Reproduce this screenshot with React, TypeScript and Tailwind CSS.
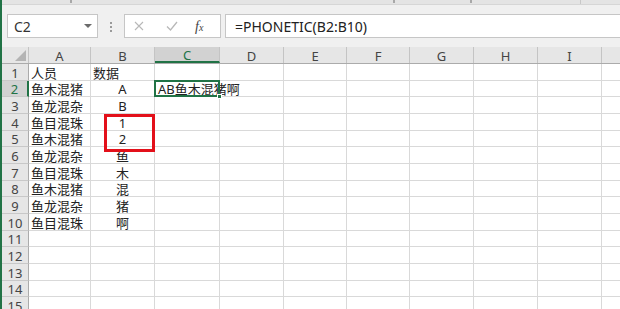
import React from 'react';

const font = { fontFamily: '"Noto Sans", "Noto Sans CJK SC", sans-serif' };

const columns = [
  { key: 'A', w: 'w-[62px]' },
  { key: 'B', w: 'w-[64px]' },
  { key: 'C', w: 'w-[65px]' },
  { key: 'D', w: 'w-[64px]' },
  { key: 'E', w: 'w-[63px]' },
  { key: 'F', w: 'w-[63px]' },
  { key: 'G', w: 'w-[64px]' },
  { key: 'H', w: 'w-[64px]' },
  { key: 'I', w: 'w-[64px]' },
  { key: 'J', w: 'w-[64px]' },
];

const data: Record<number, { a?: string; b?: string; bLeft?: boolean }> = {
  1: { a: '人员', b: '数据', bLeft: true },
  2: { a: '鱼木混猪', b: 'A' },
  3: { a: '鱼龙混杂', b: 'B' },
  4: { a: '鱼目混珠', b: '1' },
  5: { a: '鱼木混猪', b: '2' },
  6: { a: '鱼龙混杂', b: '鱼' },
  7: { a: '鱼目混珠', b: '木' },
  8: { a: '鱼木混猪', b: '混' },
  9: { a: '鱼龙混杂', b: '猪' },
  10: { a: '鱼目混珠', b: '啊' },
};

function FormulaBar() {
  return (
    <div className="flex h-[42px] items-start bg-[#f0f0f0] pl-[5px] pt-[9px]">
      <div className="flex h-[24px] w-[91px] items-center justify-between border border-[#c6c6c6] bg-white pl-[6px] pr-[5px] text-[14px] text-[#333]">
        <span>C2</span>
        <span className="h-0 w-0 border-x-[4px] border-t-[4px] border-x-transparent border-t-[#6b6b6b]" />
      </div>
      <div className="flex w-[26px] flex-col items-center gap-[2px] pt-[8px]">
        <span className="h-[2px] w-[2px] bg-[#9a9a9a]" />
        <span className="h-[2px] w-[2px] bg-[#9a9a9a]" />
        <span className="h-[2px] w-[2px] bg-[#9a9a9a]" />
      </div>
      <div className="flex h-[24px] w-[97px] items-center border border-[#c6c6c6] bg-white">
        <svg className="ml-[9px]" width="10" height="10" viewBox="0 0 10 10">
          <path d="M1 1 L9 9 M9 1 L1 9" stroke="#b8b8b8" strokeWidth="1.1" fill="none" />
        </svg>
        <svg className="ml-[22px]" width="12" height="10" viewBox="0 0 12 10">
          <path d="M1 5.5 L4.5 9 L11 1" stroke="#b8b8b8" strokeWidth="1.3" fill="none" />
        </svg>
        <span className="ml-[17px] text-[14px] italic text-[#444]" style={{ fontFamily: '"Liberation Serif", serif' }}>
          f<span className="text-[10px]">x</span>
        </span>
      </div>
      <div className="ml-[4px] flex h-[24px] flex-1 items-center border border-r-0 border-[#c6c6c6] bg-white pl-[9px] text-[14px] text-[#222]">
        =PHONETIC(B2:B10)
      </div>
    </div>
  );
}

function HeaderRow() {
  return (
    <div className="flex h-[17px] border-b border-[#ababab] bg-[#e6e6e6]">
      <div className="relative w-[27px] shrink-0 border-r border-[#c4c4c4]">
        <span className="absolute bottom-[2px] right-[2px] h-0 w-0 border-b-[11px] border-l-[11px] border-l-transparent border-b-[#b4b4b4]" />
      </div>
      {columns.map((c) => {
        const sel = c.key === 'C';
        return (
          <div
            key={c.key}
            className={`${c.w} flex shrink-0 items-center justify-center border-r border-[#c4c4c4] pt-[3px] text-[13px] leading-none ${
              sel ? 'border-b-2 border-b-[#217346] bg-[#d2d2d2] text-[#217346]' : 'text-[#444]'
            }`}
          >
            {c.key}
          </div>
        );
      })}
    </div>
  );
}

function Row({ n }: { n: number }) {
  const row = data[n] || {};
  const selRow = n === 2;
  return (
    <div className="flex h-[16.67px]">
      <div
        className={`flex w-[27px] shrink-0 items-center justify-center border-b border-[#c8c8c8] pt-[3px] text-[13px] leading-none ${
          selRow ? 'border-r-2 border-r-[#217346] bg-[#d2d2d2] text-[#217346]' : 'border-r border-r-[#ababab] bg-[#e6e6e6] text-[#444]'
        }`}
      >
        {n}
      </div>
      {columns.map((c) => {
        let content: React.ReactNode = null;
        let cls = '';
        if (c.key === 'A' && row.a) {
          content = row.a;
          cls = 'justify-start pl-[2px]';
        }
        if (c.key === 'B' && row.b) {
          content = row.b;
          cls = row.bLeft ? 'justify-start pl-[2px]' : 'justify-center';
        }
        const active = c.key === 'C' && n === 2;
        return (
          <div
            key={c.key}
            className={`${c.w} relative flex shrink-0 items-center border-b border-r border-[#d9d9d9] pt-[3px] text-[13px] leading-none text-[#222] ${cls}`}
          >
            {content}
            {active && (
              <>
                <span className="relative z-10 whitespace-nowrap pl-[3px]">AB鱼木混猪啊</span>
                <span className="absolute -left-[1px] -top-[1px] bottom-[-1px] right-[-1px] z-20 border-2 border-[#217346]" />
                <span className="absolute -bottom-[3px] -right-[3px] z-30 h-[5px] w-[5px] border border-white bg-[#217346]" />
              </>
            )}
          </div>
        );
      })}
    </div>
  );
}

export default function App() {
  const rows = Array.from({ length: 15 }, (_, i) => i + 1);
  return (
    <div className="relative h-[309px] w-[620px] overflow-hidden border-l-2 border-[#217346] bg-white" style={font}>
      <div className="relative h-[5px] border-b border-[#d6d6d6] bg-[#e4e4e4]">
        <span className="absolute left-[68px] top-0 h-[3px] w-[2px] bg-[#a8a8a8]" />
        <span className="absolute left-[391px] top-0 h-[3px] w-[2px] bg-[#a8a8a8]" />
        <span className="absolute left-[468px] top-0 h-[3px] w-[2px] bg-[#a8a8a8]" />
        <span className="absolute left-[578px] top-0 h-[4px] w-[1px] bg-[#c8c8c8]" />
      </div>
      <FormulaBar />
      <HeaderRow />
      {rows.map((n) => (
        <Row key={n} n={n} />
      ))}
      <div className="absolute left-[102px] top-[114px] h-[38px] w-[51px] border-[3px] border-[#e3101a]" />
    </div>
  );
}
